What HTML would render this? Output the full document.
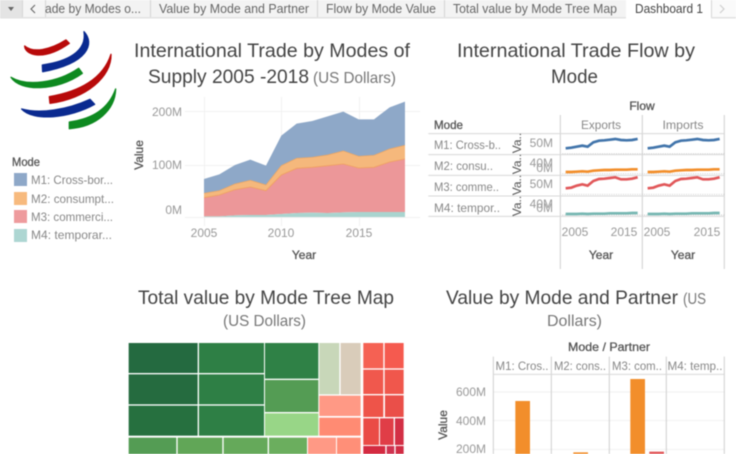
<!DOCTYPE html>
<html><head><meta charset="utf-8"><style>
html,body{margin:0;padding:0;background:#fff;width:736px;height:454px;overflow:hidden}
svg{display:block;filter:blur(.4px);font-family:"Liberation Sans",sans-serif}
.t{font-size:19.500px;fill:#444}
.s{font-size:16px;fill:#777}
.a{font-size:12px;fill:#999}
.h{font-size:12px;fill:#555;stroke:#555;stroke-width:.3px}
.l{font-size:12px;fill:#888}
.b{font-size:13px;fill:#666}
</style></head><body>
<svg width="736" height="454" viewBox="0 0 736 454" xmlns="http://www.w3.org/2000/svg">
<rect width="736" height="454" fill="#fff"/>
<!-- tabs -->
<rect width="736" height="18" fill="#f3f3f3"/>
<rect y="17" width="736" height="1.5" fill="#e2e2e2"/>
<rect width="22" height="17" fill="#e4e4e4"/>
<path d="M8 7h6l-3 4z" fill="#666"/>
<rect x="22" width="23" height="17" fill="#f5f5f5"/>
<path d="M22.500 0v17M45.500 0v17" stroke="#d5d5d5"/>
<path d="M35 5l-4 4 4 4" fill="none" stroke="#666" stroke-width="1.100"/>
<text x="45" y="13" class="b" textLength="96" lengthAdjust="spacingAndGlyphs">ade by Modes o...</text>
<path d="M150.500 0v17M317.500 0v17M444.500 0v17" stroke="#d5d5d5"/>
<text x="159" y="13" class="b" textLength="150" lengthAdjust="spacingAndGlyphs">Value by Mode and Partner</text>
<text x="326" y="13" class="b" textLength="110" lengthAdjust="spacingAndGlyphs">Flow by Mode Value</text>
<text x="453" y="13" class="b" textLength="164" lengthAdjust="spacingAndGlyphs">Total value by Mode Tree Map</text>
<rect x="626" width="85" height="19" fill="#fff"/>
<text x="635" y="13" font-size="13" fill="#444" textLength="68" lengthAdjust="spacingAndGlyphs">Dashboard 1</text>
<rect x="712" width="24" height="17" fill="#fafafa"/>
<path d="M711.500 0v17" stroke="#d5d5d5"/>
<path d="M720 5l4 4-4 4" fill="none" stroke="#ccc" stroke-width="1.100"/>
<!-- logo -->
<g transform="translate(0,20) scale(.3333)" stroke-width="4" stroke-linejoin="round">
<path d="M74 78C75 105 130 125 208 70L198 60C150 90 100 100 74 78Z" fill="#b80a0a" stroke="#b80a0a"/>
<path d="M252 35C285 70 265 130 128 155L127 135C200 125 262 95 252 35Z" fill="#0a2a90" stroke="#0a2a90"/>
<path d="M33 172C60 215 170 215 247 160L236 145C170 190 80 200 33 172Z" fill="#0e8a20" stroke="#0e8a20"/>
<path d="M333 103C335 170 260 235 150 250L148 230C240 215 310 175 333 103Z" fill="#b80a0a" stroke="#b80a0a"/>
<path d="M65 267C100 305 210 295 284 253L270 238C200 270 120 282 65 267Z" fill="#0a2a90" stroke="#0a2a90"/>
<path d="M347 207C345 270 290 320 208 326L208 306C270 298 325 270 347 207Z" fill="#0e8a20" stroke="#0e8a20"/>
</g>
<!-- titles -->
<text x="134" y="57" class="t" textLength="276" lengthAdjust="spacingAndGlyphs">International Trade by Modes of</text>
<text x="148" y="83" class="t" textLength="161" lengthAdjust="spacingAndGlyphs">Supply 2005 -2018</text>
<text x="313" y="83" class="s" textLength="83" lengthAdjust="spacingAndGlyphs">(US Dollars)</text>
<text x="457" y="57" class="t" textLength="238" lengthAdjust="spacingAndGlyphs">International Trade Flow by</text>
<text x="551" y="83" class="t" textLength="47" lengthAdjust="spacingAndGlyphs">Mode</text>
<text x="138" y="304" class="t" textLength="256" lengthAdjust="spacingAndGlyphs">Total value by Mode Tree Map</text>
<text x="223" y="326" class="s" textLength="83" lengthAdjust="spacingAndGlyphs">(US Dollars)</text>
<text x="446" y="304" class="t" textLength="232" lengthAdjust="spacingAndGlyphs">Value by Mode and Partner</text>
<text x="683" y="304" class="s" textLength="23" lengthAdjust="spacingAndGlyphs">(US</text>
<text x="547" y="326" class="s" textLength="55" lengthAdjust="spacingAndGlyphs">Dollars)</text>
<!-- legend -->
<text x="12" y="166" class="h" textLength="28" lengthAdjust="spacingAndGlyphs">Mode</text>
<rect x="14" y="173" width="13" height="13" fill="#8ea8c8"/>
<rect x="14" y="192" width="13" height="13" fill="#f7ba7e"/>
<rect x="14" y="210" width="13" height="13" fill="#ee9b9d"/>
<rect x="14" y="229" width="13" height="13" fill="#add6d2"/>
<text x="31" y="184" class="l" textLength="82" lengthAdjust="spacingAndGlyphs">M1: Cross-bor...</text>
<text x="31" y="203" class="l" textLength="83" lengthAdjust="spacingAndGlyphs">M2: consumpt...</text>
<text x="31" y="221" class="l" textLength="82" lengthAdjust="spacingAndGlyphs">M3: commerci...</text>
<text x="31" y="239" class="l" textLength="81" lengthAdjust="spacingAndGlyphs">M4: temporar...</text>
<!-- area chart -->
<path d="M204.500 97v129M281.500 97v129M359.500 97v129M185 111.500h235M185 165.500h235M185 217.500h235" stroke="#f1f1f1"/>
<g transform="translate(130,95) scale(.3333)">
<path d="M222 252L268 238 315 210 361 194 408 212 454 122 500 86 547 78 593 64 640 50 686 73 732 73 779 37 825 20V151L779 162 732 181 686 184 640 168 593 180 547 187 500 190 454 212 408 270 361 256 315 267 268 287 222 295Z" fill="#8ea8c8"/>
<path d="M222 295L268 287 315 267 361 256 408 270 454 212 500 190 547 187 593 180 640 168 686 184 732 181 779 162 825 151V192L779 201 732 217 686 219 640 207 593 212 547 217 500 220 454 240 408 287 361 276 315 284 268 300 222 308Z" fill="#f5b87c"/>
<path d="M222 308L268 300 315 284 361 276 408 287 454 240 500 220 547 217 593 212 640 207 686 219 732 217 779 201 825 192V351L779 351 732 351 686 351 640 352 593 354 547 353 500 354 454 357 408 360 361 360 315 361 268 364 222 364Z" fill="#ec9799"/>
<path d="M222 364L268 364 315 361 361 360 408 360 454 357 500 354 547 353 593 354 640 352 686 351 732 351 779 351 825 351V366H222Z" fill="#a9d4cf"/>
<path d="M222 308L268 300 315 284 361 276 408 287 454 240 500 220 547 217 593 212 640 207 686 219 732 217 779 201 825 192" fill="none" stroke="#f0a060" stroke-width="2.500"/>
<path d="M222 295L268 287 315 267 361 256 408 270 454 212 500 190 547 187 593 180 640 168 686 184 732 181 779 162 825 151" fill="none" stroke="#efa45e" stroke-width="2"/>
</g>
<text x="182" y="116" class="a" text-anchor="end">200M</text>
<text x="182" y="169" class="a" text-anchor="end">100M</text>
<text x="182" y="214" class="a" text-anchor="end">0M</text>
<text x="204" y="237" class="a" text-anchor="middle">2005</text>
<text x="281" y="237" class="a" text-anchor="middle">2010</text>
<text x="359" y="237" class="a" text-anchor="middle">2015</text>
<text x="304" y="259" class="h" text-anchor="middle">Year</text>
<text transform="translate(143,155) rotate(-90)" class="h" text-anchor="middle">Value</text>
<!-- flow chart -->
<g transform="translate(425,95) scale(.3333)">
<path d="M406 60V522M652 60V522M898 60V522" stroke="#cfcfcf" stroke-width="3"/>
<path d="M10 116H898M10 179H898M10 241H898M10 303H898M10 364H898" stroke="#d8d8d8" stroke-width="3"/>
<path d="M412 176H898M412 236H898M412 298H898M412 360H898" stroke="#bbb" stroke-width="2" stroke-dasharray="3 4"/>
<g fill="none" stroke-width="8">
<path d="M422 160L439 158 455 155 472 152 488 155 505 142 522 137 538 136 555 134 571 132 588 135 605 136 621 135 638 132" stroke="#4275ab"/>
<path d="M422 231L439 231 455 230 472 229 488 230 505 227 522 226 538 225 555 225 571 224 588 224 605 224 621 223 638 223" stroke="#f28e2b"/>
<path d="M422 280L439 278 455 272 472 268 488 272 505 258 522 252 538 251 555 249 571 247 588 253 605 253 621 251 638 247" stroke="#e15759"/>
<path d="M422 357L439 357 455 357 472 356 488 357 505 356 522 356 538 356 555 355 571 355 588 355 605 355 621 354 638 354" stroke="#76b7b2"/>
<path transform="translate(246,0)" d="M422 160L439 158 455 155 472 152 488 155 505 142 522 137 538 136 555 134 571 132 588 135 605 136 621 135 638 132" stroke="#4275ab"/>
<path transform="translate(246,0)" d="M422 231L439 231 455 230 472 229 488 230 505 227 522 226 538 225 555 225 571 224 588 224 605 224 621 223 638 223" stroke="#f28e2b"/>
<path transform="translate(246,0)" d="M422 280L439 278 455 272 472 268 488 272 505 258 522 252 538 251 555 249 571 247 588 253 605 253 621 251 638 247" stroke="#e15759"/>
<path transform="translate(246,0)" d="M422 357L439 357 455 357 472 356 488 357 505 356 522 356 538 356 555 355 571 355 588 355 605 355 621 354 638 354" stroke="#76b7b2"/>
</g>
</g>
<text x="642" y="110" class="h" text-anchor="middle">Flow</text>
<text x="601" y="129" class="l" text-anchor="middle" textLength="40" lengthAdjust="spacingAndGlyphs">Exports</text>
<text x="683" y="129" class="l" text-anchor="middle" textLength="41" lengthAdjust="spacingAndGlyphs">Imports</text>
<text x="434" y="129" class="h" textLength="29" lengthAdjust="spacingAndGlyphs">Mode</text>
<text x="434" y="149" class="l" textLength="67" lengthAdjust="spacingAndGlyphs">M1: Cross-b..</text>
<text x="434" y="170" class="l" textLength="59" lengthAdjust="spacingAndGlyphs">M2: consu..</text>
<text x="434" y="191" class="l" textLength="65" lengthAdjust="spacingAndGlyphs">M3: comme..</text>
<text x="434" y="212" class="l" textLength="66" lengthAdjust="spacingAndGlyphs">M4: tempor..</text>
<text transform="translate(521,143) rotate(-90)" class="l" style="fill:#555" text-anchor="middle">Va..</text>
<text transform="translate(521,164) rotate(-90)" class="l" style="fill:#555" text-anchor="middle">Va..</text>
<text transform="translate(521,185) rotate(-90)" class="l" style="fill:#555" text-anchor="middle">Va..</text>
<text transform="translate(521,206) rotate(-90)" class="l" style="fill:#555" text-anchor="middle">Va..</text>
<text x="553" y="147" class="a" text-anchor="end">50M</text>
<text x="553" y="167" class="a" text-anchor="end">40M</text>
<text x="553" y="172" class="a" text-anchor="end">0M</text>
<text x="553" y="188" class="a" text-anchor="end">50M</text>
<text x="553" y="208" class="a" text-anchor="end">40M</text>
<text x="553" y="212" class="a" text-anchor="end">0M</text>
<text x="575" y="236" class="a" text-anchor="middle">2005</text>
<text x="624" y="236" class="a" text-anchor="middle">2015</text>
<text x="657" y="236" class="a" text-anchor="middle">2005</text>
<text x="707" y="236" class="a" text-anchor="middle">2015</text>
<text x="601" y="259" class="h" text-anchor="middle">Year</text>
<text x="683" y="259" class="h" text-anchor="middle">Year</text>
<!-- treemap -->
<g transform="translate(120,335) scale(.3333)">
<rect x="26" y="24" width="207" height="90" fill="#246a40"/>
<rect x="26" y="118" width="207" height="90" fill="#256b3f"/>
<rect x="26" y="212" width="207" height="90" fill="#26703f"/>
<rect x="237" y="24" width="195" height="90" fill="#2e7f45"/>
<rect x="237" y="118" width="195" height="90" fill="#2e7f45"/>
<rect x="237" y="212" width="195" height="90" fill="#2e7f45"/>
<rect x="435" y="24" width="160" height="107" fill="#2f8146"/>
<rect x="435" y="135" width="160" height="96" fill="#549c54"/>
<rect x="435" y="235" width="160" height="67" fill="#98d687"/>
<rect x="598" y="24" width="60" height="154" fill="#c8d7b9"/>
<rect x="662" y="24" width="60" height="154" fill="#d9ccba"/>
<rect x="598" y="182" width="124" height="61" fill="#ff9985"/>
<rect x="598" y="248" width="124" height="54" fill="#ff8b73"/>
<rect x="26" y="308" width="143" height="49" fill="#549c54"/>
<rect x="173" y="308" width="134" height="49" fill="#61a657"/>
<rect x="311" y="308" width="132" height="49" fill="#65a95a"/>
<rect x="447" y="308" width="114" height="49" fill="#6bae5e"/>
<rect x="564" y="308" width="84" height="49" fill="#ff9985"/>
<rect x="651" y="308" width="71" height="49" fill="#ff8f78"/>
<rect x="730" y="24" width="60" height="76" fill="#f56153"/>
<rect x="794" y="24" width="57" height="76" fill="#f55a4f"/>
<rect x="730" y="104" width="60" height="73" fill="#f0584d"/>
<rect x="794" y="104" width="57" height="73" fill="#f0574c"/>
<rect x="730" y="181" width="60" height="65" fill="#ee5449"/>
<rect x="795" y="181" width="56" height="65" fill="#ea4f49"/>
<rect x="730" y="250" width="47" height="80" fill="#ea4b46"/>
<rect x="780" y="250" width="41" height="80" fill="#e03d47"/>
<rect x="825" y="250" width="26" height="80" fill="#d32f45"/>
<rect x="730" y="333" width="66" height="24" fill="#d42b41"/>
<rect x="800" y="333" width="23" height="24" fill="#cf3350"/>
<rect x="827" y="333" width="24" height="24" fill="#d12c44"/>
</g>
<!-- bars -->
<g transform="translate(430,335) scale(.3333)">
<path d="M190 171H883M190 257H883M190 343H883" stroke="#f1f1f1" stroke-width="3"/>
<path d="M190 65V357M364 65V357M538 65V357M709 65V357M883 65V357" stroke="#cfcfcf" stroke-width="3"/>
<path d="M190 118H883" stroke="#d8d8d8" stroke-width="3"/>
<rect x="256" y="198" width="44" height="159" fill="#f28e2b"/>
<rect x="430" y="352" width="44" height="5" fill="#f28e2b"/>
<rect x="601" y="132" width="44" height="225" fill="#f28e2b"/>
<rect x="658" y="350" width="44" height="7" fill="#e15759"/>
</g>
<text x="609" y="351" class="h" text-anchor="middle" textLength="82" lengthAdjust="spacingAndGlyphs">Mode / Partner</text>
<text x="522" y="370" class="l" text-anchor="middle" textLength="53" lengthAdjust="spacingAndGlyphs">M1: Cros..</text>
<text x="580" y="370" class="l" text-anchor="middle" textLength="52" lengthAdjust="spacingAndGlyphs">M2: cons..</text>
<text x="637" y="370" class="l" text-anchor="middle" textLength="50" lengthAdjust="spacingAndGlyphs">M3: com..</text>
<text x="695" y="370" class="l" text-anchor="middle" textLength="55" lengthAdjust="spacingAndGlyphs">M4: temp..</text>
<text x="486" y="396" class="a" text-anchor="end">600M</text>
<text x="486" y="425" class="a" text-anchor="end">400M</text>
<text x="486" y="453" class="a" text-anchor="end">200M</text>
<text transform="translate(447,425) rotate(-90)" class="h" text-anchor="middle">Value</text>
</svg>
</body></html>
